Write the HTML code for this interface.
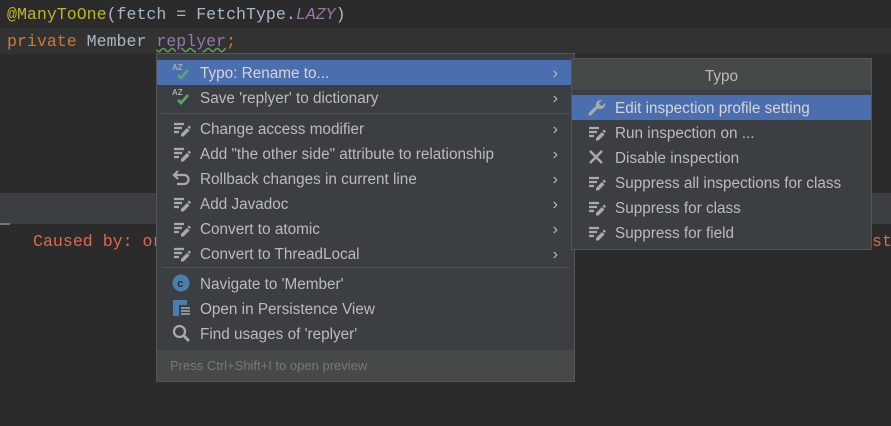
<!DOCTYPE html><html><head><style>
body{margin:0;width:891px;height:426px;background:#2b2b2b;position:relative;overflow:hidden;font-family:"Liberation Sans",sans-serif}
.code{position:absolute;left:7px;font-family:"Liberation Mono",monospace;font-size:16.6px;color:#a9b7c6;white-space:pre}
.m{position:absolute;background:#3c3f41;border:1px solid #555;box-sizing:border-box}
.it{position:absolute;left:0;right:0;height:25px;line-height:27px;font-size:15.3px;color:#bbbbbb;padding-left:43px;box-sizing:border-box;white-space:nowrap}
.hl{background:#4b6eaf;color:#d6d6d6}
.ar{position:absolute;right:16px;top:0;font-size:16px;color:#bbb}
.ic{position:absolute;left:15px;top:3px;width:19px;height:19px}
.sep{position:absolute;left:4px;right:4px;height:1px;background:#4e5254}
</style></head><body>
<div style="position:absolute;left:0;top:28px;width:891px;height:26px;background:#323232"></div>
<div class="code" style="top:5px"><span style="color:#bbb529">@ManyToOne</span>(fetch = FetchType.<i style="color:#9876aa">LAZY</i>)</div>
<div class="code" style="top:32px"><span style="color:#cc7832">private</span> Member <span style="color:#9876aa;text-decoration:underline wavy #629755">replyer</span><span style="color:#cc7832">;</span></div>
<div style="position:absolute;left:0;top:193px;width:891px;height:31px;background:#3c3f41"></div>
<div style="position:absolute;left:0;top:223px;width:10px;height:2px;background:#777"></div>
<div class="code" style="top:232px;left:33px;color:#e2674b">Caused by: or</div>
<div class="code" style="top:232px;left:872px;color:#e2674b">st</div>

<svg width="0" height="0" style="position:absolute"><defs>
<g id="az"><text x="0" y="7" font-size="8" font-family="Liberation Sans" font-weight="bold" fill="#aaa">AZ</text><path d="M6 12l3 3 7-8" stroke="#59a869" stroke-width="2.8" fill="none"/></g>
<g id="ed"><path d="M2 5h10M2 9h8M2 13h5" stroke="#aaa" stroke-width="2.2"/><path d="M9 15l6-6 2.5 2.5-6 6h-2.5z" fill="#aaa"/><path d="M15.5 8l1.5-1.5 2 2-1.5 1.5z" fill="#aaa"/></g>
</defs></svg>

<div class="m" style="left:156px;top:53px;width:419px;height:329px">
<div class="it hl" style="top:6px"><svg class="ic"><use href="#az"/></svg>Typo: Rename to...<span class="ar">›</span></div>
<div class="it" style="top:31px"><svg class="ic"><use href="#az"/></svg>Save 'replyer' to dictionary<span class="ar">›</span></div>
<div class="sep" style="top:59px"></div>
<div class="it" style="top:62px"><svg class="ic"><use href="#ed"/></svg>Change access modifier<span class="ar">›</span></div>
<div class="it" style="top:87px"><svg class="ic"><use href="#ed"/></svg>Add "the other side" attribute to relationship<span class="ar">›</span></div>
<div class="it" style="top:112px"><svg class="ic"><path d="M6 2L2 6l4 4M2 6h10a4.5 4.5 0 0 1 0 9H5" stroke="#aaa" stroke-width="2.2" fill="none"/></svg>Rollback changes in current line<span class="ar">›</span></div>
<div class="it" style="top:137px"><svg class="ic"><use href="#ed"/></svg>Add Javadoc<span class="ar">›</span></div>
<div class="it" style="top:162px"><svg class="ic"><use href="#ed"/></svg>Convert to atomic<span class="ar">›</span></div>
<div class="it" style="top:187px"><svg class="ic"><use href="#ed"/></svg>Convert to ThreadLocal<span class="ar">›</span></div>
<div class="sep" style="top:213px"></div>
<div class="it" style="top:217px"><svg class="ic"><circle cx="9" cy="9" r="8.5" fill="#4a7eb0"/><text x="5.2" y="13" font-size="11" font-weight="bold" fill="#2b2b2b" font-family="Liberation Sans">c</text></svg>Navigate to 'Member'</div>
<div class="it" style="top:242px"><svg class="ic"><path d="M1 1h14v5H7v11H1z" fill="#4a7eb0"/><path d="M9 9h9M9 12h9M9 15h9" stroke="#aaa" stroke-width="1.6"/></svg>Open in Persistence View</div>
<div class="it" style="top:267px"><svg class="ic"><circle cx="7.5" cy="7.5" r="5.5" stroke="#aaa" stroke-width="2.2" fill="none"/><path d="M11.5 11.5l5.5 5.5" stroke="#aaa" stroke-width="2.8"/></svg>Find usages of 'replyer'</div>
<div style="position:absolute;left:0;right:0;top:296px;bottom:0;background:#45494a;font-size:13px;color:#787878;padding:8px 0 0 13px;box-sizing:border-box">Press Ctrl+Shift+I to open preview</div>
</div>

<div class="m" style="left:571px;top:58px;width:301px;height:192px">
<div style="position:absolute;left:0;right:0;top:0;height:31px;background:#45494a;text-align:center;line-height:35px;font-size:15.3px;color:#bbb">Typo</div>
<div class="it hl" style="top:36px"><svg class="ic"><path d="M3 16l7-7" stroke="#aaa" stroke-width="3.2" stroke-linecap="round"/><path d="M9 8a5 5 0 0 1 6-6l-3 3 1 2 2 1 3-3a5 5 0 0 1-6 6z" fill="#aaa"/></svg>Edit inspection profile setting</div>
<div class="it" style="top:61px"><svg class="ic"><use href="#ed"/></svg>Run inspection on ...</div>
<div class="it" style="top:86px"><svg class="ic"><path d="M3 3l12 12M15 3L3 15" stroke="#aaa" stroke-width="2.4"/></svg>Disable inspection</div>
<div class="it" style="top:111px"><svg class="ic"><use href="#ed"/></svg>Suppress all inspections for class</div>
<div class="it" style="top:136px"><svg class="ic"><use href="#ed"/></svg>Suppress for class</div>
<div class="it" style="top:161px"><svg class="ic"><use href="#ed"/></svg>Suppress for field</div>
</div>
</body></html>
